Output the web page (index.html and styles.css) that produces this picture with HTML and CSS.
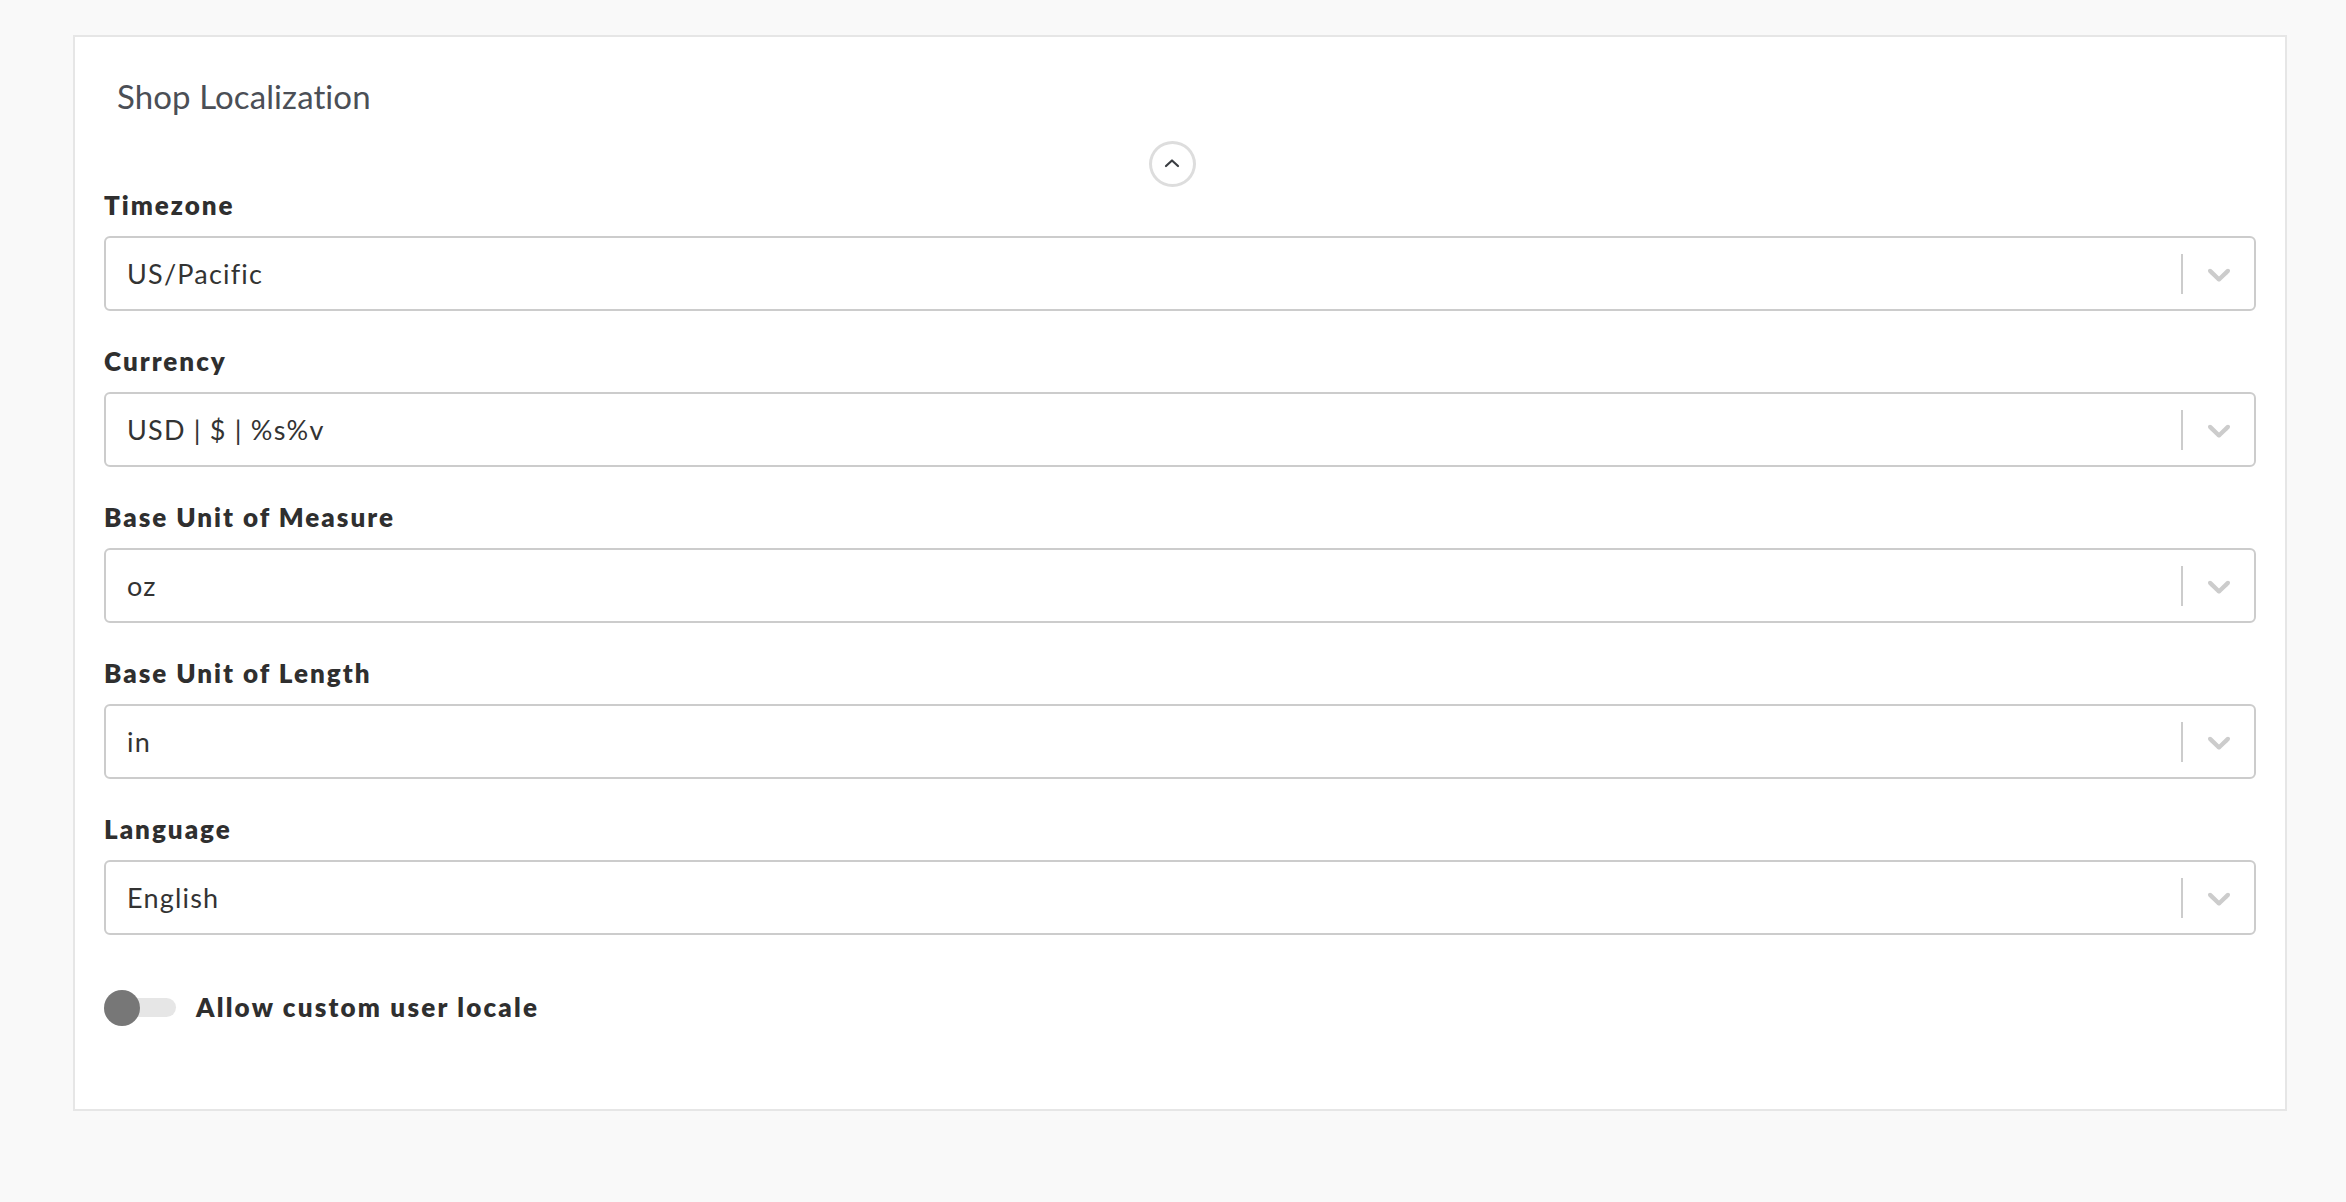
FILE: index.html
```html
<!DOCTYPE html>
<html lang="en">
<head>
<meta charset="utf-8">
<title>Shop Localization</title>
<link rel="stylesheet" href="styles.css">
</head>
<body>
<div class="card">
  <h2 class="card-title">Shop Localization</h2>
  <div class="collapse-row">
    <button class="collapse-btn" type="button" aria-label="Collapse">
      <svg width="16" height="10" viewBox="0 0 16 10"><path d="M2 8 L8 2.5 L14 8" fill="none" stroke="#3a3d42" stroke-width="2.2" stroke-linecap="round" stroke-linejoin="round"/></svg>
    </button>
  </div>
  <div class="fields">
    <div class="field">
      <label class="field-label">Timezone</label>
      <div class="select">
        <span class="select-value">US/Pacific</span>
        <span class="select-sep"></span>
        <span class="select-ind"><svg width="38" height="38" viewBox="0 0 20 20"><path d="M4.516 7.548c0.436-0.446 1.043-0.481 1.576 0l3.908 3.747 3.908-3.747c0.533-0.481 1.141-0.446 1.574 0 0.436 0.445 0.408 1.197 0 1.615-0.406 0.418-4.695 4.502-4.695 4.502-0.217 0.223-0.502 0.335-0.787 0.335s-0.57-0.112-0.789-0.335c0 0-4.287-4.084-4.695-4.502s-0.436-1.170 0-1.615z"/></svg></span>
      </div>
    </div>
    <div class="field">
      <label class="field-label">Currency</label>
      <div class="select">
        <span class="select-value">USD | $ | %s%v</span>
        <span class="select-sep"></span>
        <span class="select-ind"><svg width="38" height="38" viewBox="0 0 20 20"><path d="M4.516 7.548c0.436-0.446 1.043-0.481 1.576 0l3.908 3.747 3.908-3.747c0.533-0.481 1.141-0.446 1.574 0 0.436 0.445 0.408 1.197 0 1.615-0.406 0.418-4.695 4.502-4.695 4.502-0.217 0.223-0.502 0.335-0.787 0.335s-0.57-0.112-0.789-0.335c0 0-4.287-4.084-4.695-4.502s-0.436-1.170 0-1.615z"/></svg></span>
      </div>
    </div>
    <div class="field">
      <label class="field-label">Base Unit of Measure</label>
      <div class="select">
        <span class="select-value">oz</span>
        <span class="select-sep"></span>
        <span class="select-ind"><svg width="38" height="38" viewBox="0 0 20 20"><path d="M4.516 7.548c0.436-0.446 1.043-0.481 1.576 0l3.908 3.747 3.908-3.747c0.533-0.481 1.141-0.446 1.574 0 0.436 0.445 0.408 1.197 0 1.615-0.406 0.418-4.695 4.502-4.695 4.502-0.217 0.223-0.502 0.335-0.787 0.335s-0.57-0.112-0.789-0.335c0 0-4.287-4.084-4.695-4.502s-0.436-1.170 0-1.615z"/></svg></span>
      </div>
    </div>
    <div class="field">
      <label class="field-label">Base Unit of Length</label>
      <div class="select">
        <span class="select-value">in</span>
        <span class="select-sep"></span>
        <span class="select-ind"><svg width="38" height="38" viewBox="0 0 20 20"><path d="M4.516 7.548c0.436-0.446 1.043-0.481 1.576 0l3.908 3.747 3.908-3.747c0.533-0.481 1.141-0.446 1.574 0 0.436 0.445 0.408 1.197 0 1.615-0.406 0.418-4.695 4.502-4.695 4.502-0.217 0.223-0.502 0.335-0.787 0.335s-0.57-0.112-0.789-0.335c0 0-4.287-4.084-4.695-4.502s-0.436-1.170 0-1.615z"/></svg></span>
      </div>
    </div>
    <div class="field">
      <label class="field-label">Language</label>
      <div class="select">
        <span class="select-value">English</span>
        <span class="select-sep"></span>
        <span class="select-ind"><svg width="38" height="38" viewBox="0 0 20 20"><path d="M4.516 7.548c0.436-0.446 1.043-0.481 1.576 0l3.908 3.747 3.908-3.747c0.533-0.481 1.141-0.446 1.574 0 0.436 0.445 0.408 1.197 0 1.615-0.406 0.418-4.695 4.502-4.695 4.502-0.217 0.223-0.502 0.335-0.787 0.335s-0.57-0.112-0.789-0.335c0 0-4.287-4.084-4.695-4.502s-0.436-1.170 0-1.615z"/></svg></span>
      </div>
    </div>
  </div>
  <div class="toggle-row">
    <span class="toggle"><span class="toggle-track"></span><span class="toggle-knob"></span></span>
    <span class="toggle-label">Allow custom user locale</span>
  </div>
</div>
</body>
</html>
```

FILE: styles.css
```css
html, body {
  margin: 0;
  padding: 0;
}
body {
  background: #f9f9f9;
  font-family: Lato, "Noto Sans", "Liberation Sans", sans-serif;
  color: #333;
  width: 2346px;
  height: 1202px;
  overflow: hidden;
}
.card {
  box-sizing: border-box;
  margin: 35px 0 0 73px;
  width: 2214px;
  background: #fff;
  border: 2px solid #e6e6e6;
  padding: 39px 29px 83px 29px;
}
.card-title {
  margin: 0;
  padding-left: 13px;
  font-size: 33px;
  line-height: 40px;
  font-weight: 400;
  color: #4b4f56;
  letter-spacing: 0.1px;
}
.collapse-row {
  display: flex;
  justify-content: center;
  padding-right: 16px;
  margin-top: 25px;
  margin-bottom: 4px;
}
.collapse-btn {
  box-sizing: border-box;
  width: 47px;
  height: 46px;
  border-radius: 50%;
  border: 3px solid #dddddd;
  background: #fff;
  padding: 0;
  display: flex;
  align-items: center;
  justify-content: center;
}
.collapse-btn svg {
  display: block;
  margin-top: -2px;
}
.fields {
  display: flex;
  flex-direction: column;
  gap: 36px;
}
.field {
  display: flex;
  flex-direction: column;
  gap: 15px;
}
.field-label {
  font-size: 26px;
  line-height: 30px;
  margin-top: -1px;
  margin-bottom: 1px;
  font-weight: 800;
  color: #2f2f2f;
  letter-spacing: 2px;
}
.select {
  box-sizing: border-box;
  height: 75px;
  border: 2px solid #cccccc;
  border-radius: 6px;
  display: flex;
  align-items: center;
  padding-left: 21px;
}
.select-value {
  flex: 1;
  font-size: 27px;
  color: #333;
  letter-spacing: 1.2px;
}
.select-sep {
  width: 2px;
  height: 40px;
  background: #cccccc;
}
.select-ind {
  width: 71px;
  display: flex;
  align-items: center;
  justify-content: center;
}
.select-ind svg {
  display: block;
  fill: #cccccc;
}
.toggle-row {
  margin-top: 55px;
  display: flex;
  align-items: center;
  gap: 20px;
}
.toggle {
  position: relative;
  width: 72px;
  height: 36px;
  display: block;
}
.toggle-track {
  position: absolute;
  left: 0;
  top: 8px;
  width: 72px;
  height: 19px;
  border-radius: 10px;
  background: #e6e6e6;
}
.toggle-knob {
  position: absolute;
  left: 0;
  top: 0;
  width: 36px;
  height: 36px;
  border-radius: 50%;
  background: #777777;
}
.toggle-label {
  font-size: 26px;
  font-weight: 800;
  color: #2f2f2f;
  letter-spacing: 2.2px;
  margin-top: -2px;
}
```
